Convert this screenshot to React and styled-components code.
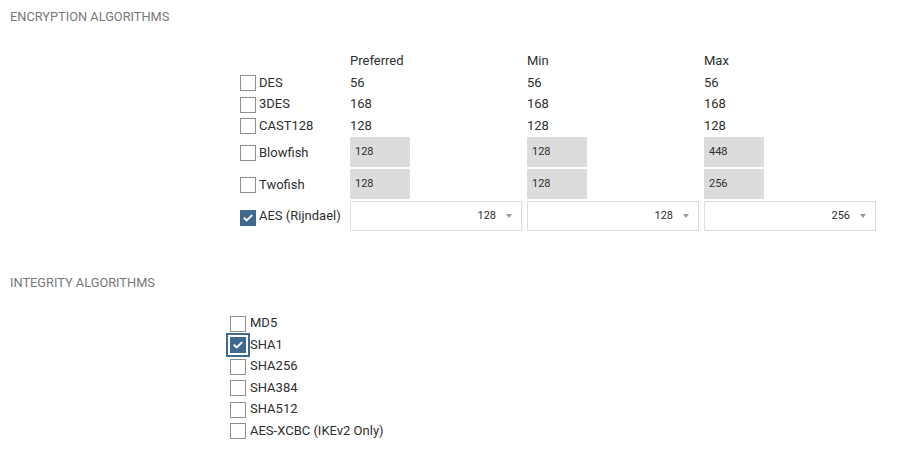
import React from "react";
import styled, { createGlobalStyle } from "styled-components";

const Global = createGlobalStyle`
  html, body { margin: 0; padding: 0; background: #fff; }
  body { font-family: Roboto, "Liberation Sans", Arial, sans-serif; color: #2e2e2e; font-size: 13px; }
`;

const Page = styled.div`
  padding: 8px 10px 0 10px;
  width: 890px;
  height: 447px;
  overflow: hidden;
`;

const Heading = styled.div`
  font-size: 12.8px;
  line-height: 17px;
  color: #777;
  text-transform: uppercase;
  margin-top: ${(p) => p.$top || 0}px;
`;

const Table = styled.div`
  margin-left: 230px;
  margin-top: 25px;
  display: grid;
  grid-template-columns: 110px 177px 177px 177px;
`;

const Cell = styled.div`
  display: flex;
  align-items: center;
  height: ${(p) => p.$h}px;
  font-size: 13px;
`;

const Label = styled.div`
  display: flex;
  align-items: center;
  gap: ${(p) => p.$gap || 3}px;
  height: ${(p) => p.$h || 21.5}px;
  font-size: 13px;
  line-height: 17px;
  white-space: nowrap;
`;

const Box = styled.span`
  position: relative;
  box-sizing: border-box;
  width: 16px;
  height: 16px;
  flex: none;
  margin-top: ${(p) => p.$dy || 2}px;
  border: 1px solid ${(p) => (p.$checked ? "#3d6a8e" : "#8f8f8f")};
  background: ${(p) => (p.$checked ? "#3d6a8e" : "#fff")};
  display: flex;
  align-items: center;
  justify-content: center;
  outline: ${(p) => (p.$focus ? "2px solid #3d6a8e" : "none")};
  outline-offset: 2px;
`;

const Fixed = styled.div`
  box-sizing: border-box;
  width: 60px;
  height: 30px;
  background: #dcdcdc;
  font-size: 11px;
  padding-left: 5px;
  display: flex;
  align-items: center;
  padding-bottom: 2px;
`;

const Select = styled.div`
  box-sizing: border-box;
  width: 172px;
  height: 30px;
  border: 1px solid #dcdcdc;
  background: #fff;
  font-size: 11px;
  display: flex;
  align-items: center;
  justify-content: flex-end;
  padding-right: 9px;
  gap: 10px;
`;

const Caret = styled.span`
  width: 0;
  height: 0;
  border-left: 3.5px solid transparent;
  border-right: 3.5px solid transparent;
  border-top: 4px solid #9a9a9a;
  margin-top: 1px;
`;

const List = styled.div`
  margin-left: 220px;
  margin-top: 21px;
  display: flex;
  flex-direction: column;
`;

const Check = () => (
  <svg width="10" height="8" viewBox="0 0 10 8">
    <path d="M1.4 4.2 L3.8 6.4 L8.6 1.6" fill="none" stroke="#fff" strokeWidth="2" strokeLinecap="round" strokeLinejoin="round" />
  </svg>
);

const CheckBox = ({ checked, focus, dy }) => (
  <Box $checked={checked} $focus={focus} $dy={dy}>
    {checked && <Check />}
  </Box>
);

const enc = [
  { name: "DES", kind: "text", v: ["56", "56", "56"] },
  { name: "3DES", kind: "text", v: ["168", "168", "168"] },
  { name: "CAST128", kind: "text", v: ["128", "128", "128"] },
  { name: "Blowfish", kind: "fixed", v: ["128", "128", "448"] },
  { name: "Twofish", kind: "fixed", v: ["128", "128", "256"] },
  { name: "AES (Rijndael)", kind: "select", v: ["128", "128", "256"], checked: true },
];

const integ = [
  { name: "MD5" },
  { name: "SHA1", checked: true, focus: true },
  { name: "SHA256" },
  { name: "SHA384" },
  { name: "SHA512" },
  { name: "AES-XCBC (IKEv2 Only)" },
];

const heightFor = (kind) => (kind === "text" ? 21.5 : kind === "fixed" ? 32 : 31);

export default function App() {
  return (
    <>
      <Global />
      <Page>
        <Heading>Encryption Algorithms</Heading>
        <Table>
          <Cell $h={21.5} />
          <Cell $h={21.5}>Preferred</Cell>
          <Cell $h={21.5}>Min</Cell>
          <Cell $h={21.5}>Max</Cell>
          {enc.map((r) => {
            const h = heightFor(r.kind);
            return (
              <React.Fragment key={r.name}>
                <Label $h={h} $gap={3}>
                  <CheckBox checked={r.checked} dy={r.kind === "select" ? 5 : 2} />
                  {r.name}
                </Label>
                {r.v.map((val, i) => (
                  <Cell $h={h} key={i}>
                    {r.kind === "text" && val}
                    {r.kind === "fixed" && <Fixed>{val}</Fixed>}
                    {r.kind === "select" && (
                      <Select>
                        {val}
                        <Caret />
                      </Select>
                    )}
                  </Cell>
                ))}
              </React.Fragment>
            );
          })}
        </Table>
        <Heading $top={43}>Integrity Algorithms</Heading>
        <List>
          {integ.map((r) => (
            <Label key={r.name} $gap={4}>
              <CheckBox checked={r.checked} focus={r.focus} />
              {r.name}
            </Label>
          ))}
        </List>
      </Page>
    </>
  );
}
